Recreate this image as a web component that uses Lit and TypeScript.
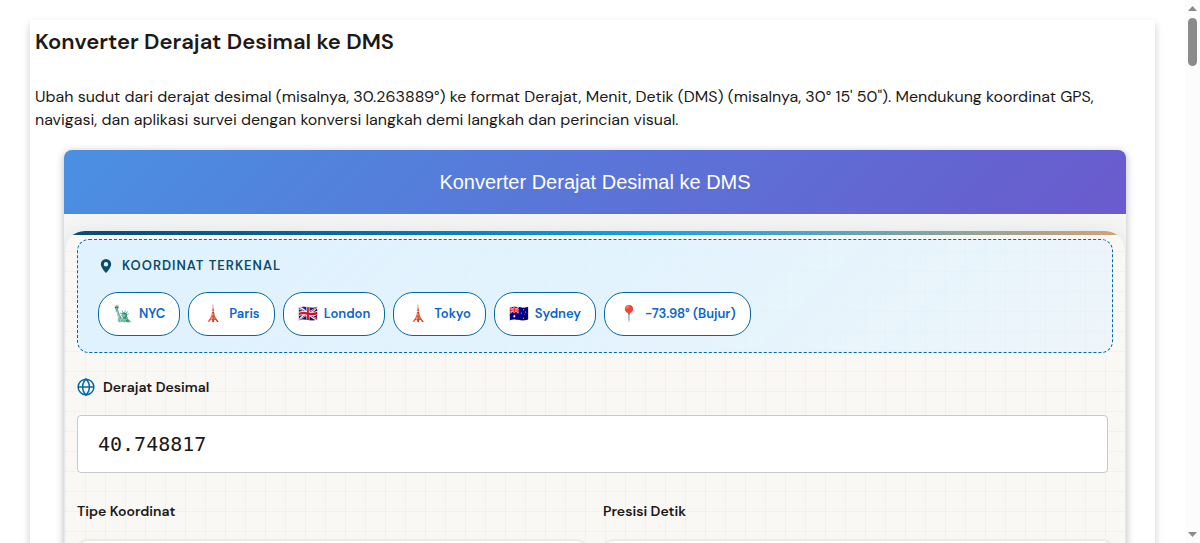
import { LitElement, html, css } from "lit";
import { customElement, state } from "lit/decorators.js";

interface Place {
  icon: string;
  label: string;
  value: string;
}

const PLACES: Place[] = [
  { icon: "🗽", label: "NYC", value: "40.748817" },
  { icon: "🗼", label: "Paris", value: "48.858370" },
  { icon: "🇬🇧", label: "London", value: "51.507351" },
  { icon: "🗼", label: "Tokyo", value: "35.658581" },
  { icon: "🇦🇺", label: "Sydney", value: "-33.856784" },
  { icon: "📍", label: "-73.98° (Bujur)", value: "-73.98" },
];

@customElement("dms-converter")
export class DmsConverter extends LitElement {
  static styles = css`
    :host {
      display: block;
      border-radius: 8px;
      background: #f6f6f5;
      box-shadow: 0 2px 8px rgba(0, 0, 0, 0.28);
    }
    * {
      box-sizing: border-box;
    }
    .banner {
      padding: 20px;
      border-radius: 8px 8px 0 0;
      background: linear-gradient(135deg, #4a90e2, #6a5acd);
      color: #fff;
      font: 20px/24px "Liberation Sans", Arial, sans-serif;
      text-align: center;
    }
    .stage {
      overflow: hidden;
      padding: 17px 1px 0;
    }
    .card {
      position: relative;
      overflow: hidden;
      padding: 8px 12px 40px;
      border-radius: 20px;
      background: #faf8f5;
      box-shadow: 0 4px 24px rgba(12, 74, 110, 0.14);
    }
    .card::before,
    .card::after {
      content: "";
      position: absolute;
      inset: 0;
      pointer-events: none;
    }
    .card::before {
      background-image: linear-gradient(rgba(12, 74, 110, 0.035) 1px, transparent 1px),
        linear-gradient(90deg, rgba(12, 74, 110, 0.035) 1px, transparent 1px);
      background-size: 20px 20px;
    }
    .card::after {
      bottom: auto;
      height: 4px;
      background: linear-gradient(90deg, #0c4a6e, #0369a1 25%, #0ea5e9 55%, #d4a373);
    }
    .famous {
      position: relative;
      padding: 16px 20px;
      border: 1px dashed #0369a1;
      border-radius: 12px;
      background: linear-gradient(135deg, #e0f2fe, rgba(224, 242, 254, 0.9) 50%, rgba(224, 242, 254, 0.5));
    }
    .famous h3 {
      display: flex;
      align-items: center;
      gap: 8px;
      margin: 0 0 16px;
      color: #0c4a6e;
      font-size: 13px;
      line-height: 20px;
      font-weight: 600;
      letter-spacing: 1px;
      text-transform: uppercase;
    }
    .chips {
      display: flex;
      flex-wrap: wrap;
      gap: 8px;
    }
    .chip {
      display: flex;
      align-items: center;
      gap: 6px;
      height: 44px;
      padding: 0 14px;
      border: 1px solid #0369a1;
      border-radius: 20px;
      background: #fff;
      color: #0a66cf;
      font: 600 13px/20px "DM Sans", sans-serif;
      cursor: pointer;
    }
    .emoji {
      font-size: 16px;
    }
    .field {
      position: relative;
      margin: 24px 5px 28px 0;
    }
    .label {
      display: flex;
      align-items: center;
      gap: 8px;
      margin-bottom: 18px;
      color: #1c1917;
      font-size: 14px;
      font-weight: 600;
      line-height: 20px;
    }
    .number {
      display: block;
      width: 100%;
      height: 58px;
      padding: 0 20px;
      border: 1px solid #c8c8cc;
      border-radius: 4px;
      background: #fff;
      color: #1c1917;
      font: 20px "DejaVu Sans Mono", monospace;
    }
    .options {
      position: relative;
      display: grid;
      grid-template-columns: 1fr 1fr;
      gap: 16px;
    }
    .select {
      width: 100%;
      height: 52px;
      padding: 0 16px;
      border: 2px solid #eeebe2;
      border-radius: 10px;
      background: #fff;
      color: #1c1917;
      font: 15px "DM Sans", sans-serif;
    }
  `;

  @state() private value = "40.748817";

  render() {
    return html`
      <div class="banner">Konverter Derajat Desimal ke DMS</div>
      <div class="stage">
        <div class="card">
          <section class="famous">
            <h3>
              <svg width="16" height="16" viewBox="0 0 16 16" aria-hidden="true">
                <path
                  fill="currentColor"
                  fill-rule="evenodd"
                  d="M8 1a5.2 5.2 0 0 0-5.2 5.2C2.800 9.600 8 15 8 15s5.200-5.400 5.200-8.800A5.200 5.200 0 0 0 8 1zm0 3a2.200 2.200 0 1 1 0 4.400A2.200 2.200 0 0 1 8 4z"
                />
              </svg>
              Koordinat Terkenal
            </h3>
            <div class="chips">
              ${PLACES.map(
                (p) => html`<button class="chip" type="button" @click=${() => (this.value = p.value)}>
                  <span class="emoji">${p.icon}</span>${p.label}
                </button>`
              )}
            </div>
          </section>
          <div class="field">
            <label class="label" for="decimal">
              <svg width="18" height="18" viewBox="0 0 24 24" fill="none" stroke="#0369a1" stroke-width="2" aria-hidden="true">
                <circle cx="12" cy="12" r="10.500" />
                <path d="M1.500 12h21M12 1.500c3.200 3 4.500 6.500 4.500 10.500s-1.300 7.500-4.500 10.500c-3.200-3-4.500-6.500-4.500-10.500s1.300-7.500 4.500-10.500z" />
              </svg>
              Derajat Desimal
            </label>
            <input class="number" id="decimal" type="text" inputmode="decimal" .value=${this.value} />
          </div>
          <div class="options">
            <div>
              <label class="label" for="type">Tipe Koordinat</label>
              <select class="select" id="type">
                <option>Lintang</option>
                <option>Bujur</option>
              </select>
            </div>
            <div>
              <label class="label" for="precision">Presisi Detik</label>
              <select class="select" id="precision">
                <option>0</option>
                <option>2</option>
              </select>
            </div>
          </div>
        </div>
      </div>
    `;
  }
}

@customElement("app-root")
export class AppRoot extends LitElement {
  static styles = css`
    :host {
      display: flex;
      height: 100vh;
      overflow: hidden;
      background: #fff;
      color: #1c1917;
      font-family: "DM Sans", sans-serif;
    }
    .view {
      flex: 1;
      min-width: 0;
      padding: 20px 30px 0;
    }
    .page {
      padding: 5px 5px 40px;
      background: #fff;
      box-shadow: 0 4px 8px rgba(0, 0, 0, 0.2);
    }
    h1 {
      margin: 0 0 26px;
      font-size: 22px;
      font-weight: 600;
      line-height: 34px;
    }
    p {
      margin: 0 0 19px;
      font-size: 16px;
      line-height: 23px;
    }
    dms-converter {
      margin: 0 24px 0 29px;
    }
    .scrollbar {
      display: flex;
      flex-direction: column;
      align-items: center;
      width: 15px;
      padding: 6px 0;
      box-sizing: border-box;
      background: #fcfcfc;
    }
    .thumb {
      width: 9px;
      height: 48px;
      margin: 7px 0 auto;
      border-radius: 5px;
      background: #8b8b8b;
    }
  `;

  render() {
    return html`
      <main class="view">
        <article class="page">
          <h1>Konverter Derajat Desimal ke DMS</h1>
          <p>
            Ubah sudut dari derajat desimal (misalnya, 30.263889°) ke format Derajat, Menit, Detik (DMS) (misalnya, 30°
            15' 50"). Mendukung koordinat GPS, navigasi, dan aplikasi survei dengan konversi langkah demi langkah dan
            perincian visual.
          </p>
          <dms-converter></dms-converter>
        </article>
      </main>
      <div class="scrollbar" aria-hidden="true">
        <svg width="9" height="5" viewBox="0 0 9 5"><path fill="#8b8b8b" d="M4.500 0 9 5H0z" /></svg>
        <div class="thumb"></div>
        <svg width="9" height="5" viewBox="0 0 9 5"><path fill="#8b8b8b" d="M0 0h9L4.500 5z" /></svg>
      </div>
    `;
  }
}
